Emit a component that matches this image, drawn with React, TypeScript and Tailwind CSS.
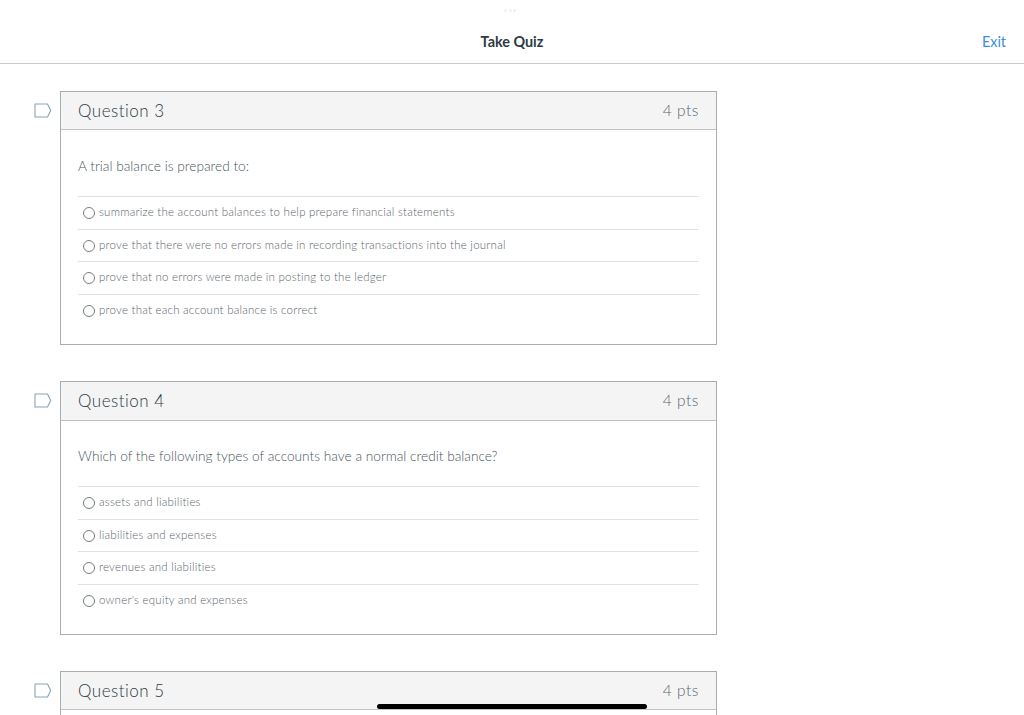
const questions = [
  {
    n: 3,
    headH: 'h-[38px]',
    bodyH: 'h-[66px] pt-[26px]',
    text: 'A trial balance is prepared to:',
    answers: [
      'summarize the account balances to help prepare financial statements',
      'prove that there were no errors made in recording transactions into the journal',
      'prove that no errors were made in posting to the ledger',
      'prove that each account balance is correct',
    ],
  },
  {
    n: 4,
    headH: 'h-[39px]',
    bodyH: 'h-[65px] pt-[25px]',
    text: 'Which of the following types of accounts have a normal credit balance?',
    answers: ['assets and liabilities', 'liabilities and expenses', 'revenues and liabilities', "owner's equity and expenses"],
  },
];

function Flag() {
  return (
    <svg width="18" height="15" viewBox="0 0 18 15" fill="none" className="absolute left-[-27px] top-[11px]">
      <path d="M1 1h12.5l3.2 6.5-3.2 6.5H1z" stroke="#8aa4ba" strokeWidth="1.1" strokeLinejoin="round" />
    </svg>
  );
}

function Head({ n, h }: { n: number; h: string }) {
  return (
    <div className={`flex items-center justify-between ${h} px-[17px] bg-[#f4f4f4] border-b border-[#c0c3c5]`}>
      <span className="text-[17px] tracking-[0.5px] text-[#2d3b45]">Question {n}</span>
      <span className="text-[15.5px] tracking-[0.55px] text-[#5a6670]">4 pts</span>
    </div>
  );
}

function Question({ q }: { q: (typeof questions)[number] }) {
  return (
    <div className="relative border border-[#a8adb0] h-[254px] mb-[36px]">
      <Flag />
      <Head n={q.n} h={q.headH} />
      <div className="px-[17px]">
        <p className={`${q.bodyH} text-[13.7px] leading-[20px] text-[#4a555c]`}>{q.text}</p>
        {q.answers.map((a) => (
          <div key={a} className="flex items-center h-[32.6px] pl-[5px] pb-[2px] border-t border-[#dfe1e2]">
            <span className="w-[12px] h-[12px] rounded-full border-[1.5px] border-[#777c80] mt-[3px] mr-[4px] shrink-0" />
            <span className="text-[11.5px] tracking-[0.23px] text-[#5c666d]">{a}</span>
          </div>
        ))}
      </div>
    </div>
  );
}

export default function App() {
  return (
    <div className="relative h-[715px] overflow-hidden bg-white font-['Lato',sans-serif] font-light">
      <div className="relative flex items-center justify-center h-[64px] pt-[20px] border-b border-[#c8cbcd]">
        <div className="absolute top-[9px] left-[504px] flex gap-[1.5px]">
          <span className="w-[3px] h-[3px] rounded-full bg-[#f1f1f1]" />
          <span className="w-[3px] h-[3px] rounded-full bg-[#f1f1f1]" />
          <span className="w-[3px] h-[3px] rounded-full bg-[#f1f1f1]" />
        </div>
        <span className="text-[14.4px] font-bold text-[#2d3b45]">Take Quiz</span>
        <span className="absolute right-[18px] top-[33px] text-[14.4px] leading-[18px] font-normal text-[#3b8fde]">Exit</span>
      </div>
      <div className="w-[657px] ml-[60px] mt-[27px]">
        {questions.map((q) => (
          <Question key={q.n} q={q} />
        ))}
        <div className="relative border border-[#a8adb0] h-[60px]">
          <Flag />
          <Head n={5} h="h-[38px]" />
        </div>
      </div>
      <div className="absolute left-[377px] top-[704px] w-[270px] h-[5px] rounded-full bg-black" />
    </div>
  );
}
